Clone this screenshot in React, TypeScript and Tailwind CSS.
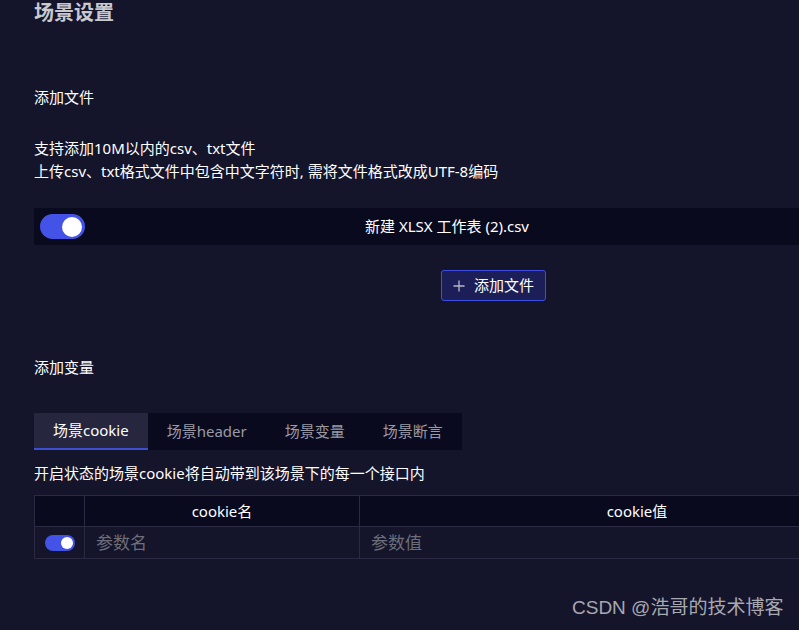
import React from "react";

const font = { fontFamily: '"Noto Sans", "Noto Sans CJK SC", sans-serif' };

function Toggle({ big }: { big?: boolean }) {
  if (big) {
    return (
      <div className="w-[45px] h-[25px] rounded-full bg-[#4353e8] flex items-center justify-end pr-[3px]">
        <div className="w-[20px] h-[20px] rounded-full bg-white" />
      </div>
    );
  }
  return (
    <div className="w-[30px] h-[16px] rounded-full bg-[#4353e8] flex items-center justify-end pr-[2px]">
      <div className="w-[12px] h-[12px] rounded-full bg-white" />
    </div>
  );
}

export default function App() {
  const tabs = ["场景cookie", "场景header", "场景变量", "场景断言"];
  return (
    <div
      className="w-[799px] h-[630px] overflow-hidden bg-[#14142b] text-white relative"
      style={font}
    >
      <div className="pl-[34px] w-[900px]">
        <div className="text-[20px] leading-[28px] font-bold text-[#c9c9cf] -mt-[1px]">场景设置</div>
        <div className="mt-[59px] text-[15px] leading-[22px] text-white">添加文件</div>
        <div className="mt-[29px] text-[15px] leading-[23px] text-white">
          <div>支持添加10M以内的csv、txt文件</div>
          <div>上传csv、txt格式文件中包含中文字符时, 需将文件格式改成UTF-8编码</div>
        </div>
        <div className="mt-[25px] w-[832px] h-[37px] bg-[#0a0a1f] flex items-center px-[6px]">
          <Toggle big />
          <div className="flex-1 text-center text-[15px] text-white pr-[51px]">新建 XLSX 工作表 (2).csv</div>
        </div>
        <div className="mt-[25px] ml-[407px] w-[105px] h-[31px] rounded-[3px] border border-[#3d4fe0] bg-[#1c1e58] flex items-center justify-center gap-[9px] text-[15px] text-white">
          <svg width="12" height="12" viewBox="0 0 12 12" className="text-[#b8b8c8]">
            <path d="M6 0.5V11.5M0.5 6H11.5" stroke="currentColor" strokeWidth="1.3" />
          </svg>
          <span>添加文件</span>
        </div>
        <div className="mt-[55px] text-[15px] leading-[22px] text-white">添加变量</div>
        <div className="mt-[35px] inline-flex h-[37px] bg-[#0a0a1f]">
          {tabs.map((t, i) => (
            <div
              key={t}
              className={
                i === 0
                  ? "shrink-0 whitespace-nowrap px-[19px] h-full flex items-center text-[15px] text-white bg-[#26263e] border-b-2 border-[#3a50d0]"
                  : "shrink-0 whitespace-nowrap px-[19px] h-full flex items-center text-[15px] text-[#9a9aa6]"
              }
            >
              {t}
            </div>
          ))}
        </div>
        <div className="mt-[12px] text-[15px] leading-[22px] text-white">开启状态的场景cookie将自动带到该场景下的每一个接口内</div>
        <div className="mt-[11px] w-[881px] border border-[#2a2a42] text-[15px]">
          <div className="flex h-[31px] bg-[#0a0a1f] border-b border-[#2a2a42]">
            <div className="w-[50px] border-r border-[#2a2a42]" />
            <div className="w-[275px] border-r border-[#2a2a42] flex items-center justify-center text-white">cookie名</div>
            <div className="flex-1 flex items-center justify-center text-white">cookie值</div>
          </div>
          <div className="flex h-[31px]">
            <div className="w-[50px] border-r border-[#2a2a42] flex items-center justify-center">
              <Toggle />
            </div>
            <div className="w-[275px] border-r border-[#2a2a42] flex items-center px-[11px] text-[17px] text-[#6e6e7a]">参数名</div>
            <div className="flex-1 flex items-center px-[11px] text-[17px] text-[#6e6e7a]">参数值</div>
          </div>
        </div>
      </div>
      <div
        className="absolute left-[572px] top-[595px] text-[19px] leading-[26px] text-[#a8a8b0]"
        style={{ fontFamily: '"Liberation Sans", "Noto Sans CJK SC", sans-serif' }}
      >
        CSDN @浩哥的技术博客
      </div>
    </div>
  );
}
